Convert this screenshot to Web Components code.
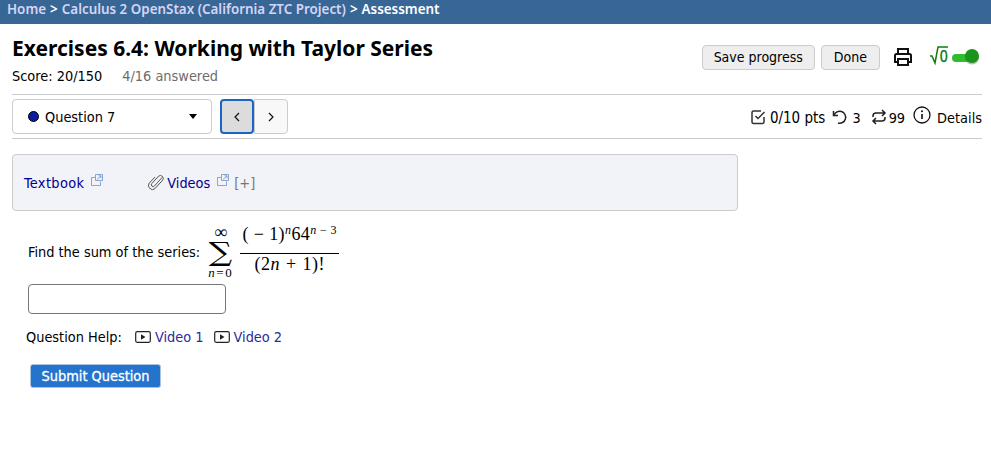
<!DOCTYPE html>
<html>
<head>
<meta charset="utf-8">
<title>Assessment</title>
<style>
  html,body{margin:0;padding:0;background:#fff;}
  body{font-family:"DejaVu Sans",sans-serif;font-stretch:condensed;font-size:14.4px;color:#000;}
</style>
</head>
<body>
<crumb-bar></crumb-bar>
<assess-header></assess-header>
<question-nav></question-nav>
<resource-box></resource-box>
<question-body></question-body>

<script>
const FONT = `"DejaVu Sans",sans-serif`;
const BOLD = `"Noto Sans","DejaVu Sans",sans-serif`;

class CrumbBar extends HTMLElement{
  constructor(){
    super();
    this.attachShadow({mode:'open'}).innerHTML = `
    <style>
      :host{display:block;background:#386795;height:24px;padding-left:7px;color:#fff;
        font-family:${BOLD};font-size:13.4px;line-height:normal;font-weight:600;}
      a{color:#d5d5f7;}
      .sep{margin:0 4px;}
    </style>
    <a>Home</a><span class="sep">&gt;</span><a>Calculus 2 OpenStax (California ZTC Project)</a><span class="sep">&gt;</span><span>Assessment</span>`;
  }
}
customElements.define('crumb-bar',CrumbBar);

class AssessHeader extends HTMLElement{
  constructor(){
    super();
    this.attachShadow({mode:'open'}).innerHTML = `
    <style>
      :host{display:flex;justify-content:space-between;margin:0 9px 0 12px;height:70px;border-bottom:1px solid #ccc;
        font-family:${FONT};font-stretch:condensed;}
      h1{margin:11px 0 0;font-family:${BOLD};font-size:21px;line-height:26px;font-weight:700;}
      .score{margin-top:7px;line-height:17px;display:flex;gap:20px;}
      .gray{color:#6d6d6d;}
      .tools{display:flex;align-items:center;height:26px;margin-top:20px;}
      button{font:inherit;font-size:14px;height:25px;background:#eee;border:1px solid #ccc;border-radius:4px;color:#000;margin-right:6px;padding:0 12px;}
      button:first-child{padding:0 11px;}
      .print{margin:0 16px 0 7px;display:block;}
    </style>
    <div>
      <h1>Exercises 6.4: Working with Taylor Series</h1>
      <div class="score"><span>Score: 20/150</span><span class="gray">4/16 answered</span></div>
    </div>
    <div class="tools">
      <button>Save progress</button><button>Done</button>
      <svg class="print" width="20" height="20" viewBox="0 0 20 20" fill="none" stroke="#111" stroke-width="2"><path d="M5 7V2h10v5M5 15H2V8.500A1.500 1.500 0 0 1 3.500 7h13A1.500 1.500 0 0 1 18 8.500V15h-3"/><path d="M5 12h10v6H5z"/></svg>
      <svg width="53" height="24" viewBox="0 0 53 24">
        <path d="M1 11h2l3 7 3-16h10" fill="none" stroke="#0d7d0d" stroke-width="1.500"/>
        <text x="10.500" y="17" font-size="15" fill="#0d7d0d" stroke="#0d7d0d" stroke-width=".3" font-family="DejaVu Sans" font-stretch="condensed" textLength="8.500" lengthAdjust="spacingAndGlyphs">0</text>
        <rect x="23" y="9" width="18" height="8" rx="4" fill="#2fbd2f"/>
        <circle cx="43" cy="12.500" r="7" fill="#555" opacity=".4"/>
        <circle cx="43" cy="11" r="7" fill="#1a951a"/>
      </svg>
    </div>`;
  }
}
customElements.define('assess-header',AssessHeader);

class QuestionNav extends HTMLElement{
  constructor(){
    super();
    this.attachShadow({mode:'open'}).innerHTML = `
    <style>
      :host{display:flex;justify-content:space-between;align-items:center;margin:0 9px 0 12px;height:43px;border-bottom:1px solid #ccc;
        font-family:${FONT};font-stretch:condensed;}
      .left{display:flex;align-items:center;}
      .select{box-sizing:border-box;width:200px;height:35px;border:1px solid #ccc;border-radius:4px;display:flex;align-items:center;padding:0 14px 0 15px;}
      .dot{width:11px;height:11px;border-radius:50%;background:#0c1c9c;border:.5px solid #000;box-sizing:border-box;margin-right:6px;}
      .caret{margin-left:auto;width:0;height:0;border:4px solid transparent;border-top:5px solid #000;border-bottom:0;}
      .pager{display:flex;margin-left:8px;}
      .pager span{box-sizing:border-box;width:34px;height:35px;display:flex;align-items:center;justify-content:center;border:1px solid #ccc;background:#f8f8f8;border-radius:0 4px 4px 0;}
      .pager .on{background:#dcdcdc;border:2px solid #1a66c4;border-radius:4px;}
      .meta{display:flex;align-items:center;}
      .meta svg{display:block;}
      .meta span{margin-top:2px;}
      .pts{font-size:15px;}
    </style>
    <div class="left">
      <div class="select"><span class="dot"></span>Question 7<span class="caret"></span></div>
      <div class="pager">
        <span class="on"><svg width="8" height="12" viewBox="0 0 8 12" fill="none" stroke="#111" stroke-width="1.200"><path d="M6 2 2 6l4 4"/></svg></span>
        <span><svg width="8" height="12" viewBox="0 0 8 12" fill="none" stroke="#111" stroke-width="1.200"><path d="M2 2l4 4-4 4"/></svg></span>
      </div>
    </div>
    <div class="meta">
      <svg width="16" height="16" viewBox="0 0 16 16" fill="none" stroke="#333" stroke-width="1.500" style="margin-right:4px"><path d="M14 8v5a1.500 1.500 0 0 1-1.500 1.500h-9A1.500 1.500 0 0 1 2 13V3.500A1.500 1.500 0 0 1 3.500 2H11"/><path d="M5.500 7l2.500 2.500L14.500 3"/></svg>
      <span class="pts">0/10 pts</span>
      <svg width="16" height="16" viewBox="0 0 16 16" fill="none" stroke="#222" stroke-width="1.500" style="margin:0 4px 0 7px"><path d="M1.500 2v4.500H6"/><path d="M2 6.300A6 6 0 1 1 6 14"/></svg>
      <span>3</span>
      <svg width="16" height="16" viewBox="0 0 16 16" fill="none" stroke="#222" stroke-width="1.500" style="margin:0 2px 0 10px"><path d="M11 1l3 3-3 3M14 4H5a3 3 0 0 0-3 3v1M5 15l-3-3 3-3M2 12h9a3 3 0 0 0 3-3V8"/></svg>
      <span>99</span>
      <svg width="18" height="18" viewBox="0 0 18 18" fill="none" stroke="#111" stroke-width="1.300" style="margin:-4px 6px 0 8px"><circle cx="9" cy="9" r="8"/><path d="M9 8v5" stroke-width="1.600"/><circle cx="9" cy="5.300" r="1" fill="#111" stroke="none"/></svg>
      <span>Details</span>
    </div>`;
  }
}
customElements.define('question-nav',QuestionNav);

class ResourceBox extends HTMLElement{
  constructor(){
    super();
    const ext = `<svg width="12" height="12" viewBox="0 0 12 12" fill="none" stroke="#7f9cc8" stroke-width=".9"><path d="M9.500 7.500v4h-9v-8H4"/><path d="M4.500.5h7v6h-7z"/><path d="M6 5.500 10 2M7.500 1.800H10v2.500"/></svg>`;
    this.attachShadow({mode:'open'}).innerHTML = `
    <style>
      :host{display:flex;align-items:center;box-sizing:border-box;width:726px;height:57px;margin:15px 0 0 12px;padding-left:11px;
        background:#f2f2f9;border:1px solid #ccc;border-radius:4px;font-family:${FONT};font-stretch:condensed;}
      a{color:#00008b;}
      .wide{letter-spacing:.35px;}
      .ext{margin-left:7px;display:block;margin-top:-3px;}
      .clip{margin-left:45px;margin-right:3px;display:block;}
      .more{color:#777;margin-left:5px;}
    </style>
    <a class="wide">Textbook</a><span class="ext">${ext}</span>
    <svg class="clip" width="16" height="17" viewBox="0 0 16 17" fill="none" stroke="#555" stroke-width="1"><path d="M14 3.500 6.500 12a1.800 1.800 0 0 1-2.700-2.400l6.800-7.500a2.900 2.900 0 0 1 4.100 4L7 14.600a4 4 0 0 1-5.800-5.400L7 3"/></svg>
    <a>Videos</a><span class="ext">${ext}</span><span class="more">[+]</span>`;
  }
}
customElements.define('resource-box',ResourceBox);

class QuestionBody extends HTMLElement{
  constructor(){
    super();
    const play = `<svg width="16" height="12" viewBox="0 0 16 12"><rect x=".7" y=".7" width="14.600" height="10.600" rx="1.500" fill="none" stroke="#222" stroke-width="1.200"/><path d="M6 3.300 10.500 6 6 8.700z" fill="#222"/></svg>`;
    this.attachShadow({mode:'open'}).innerHTML = `
    <style>
      :host{display:block;margin:14px 0 0 28px;font-family:${FONT};font-stretch:condensed;}
      .prompt{display:flex;align-items:center;height:57px;}
      .prompt>span:first-child{margin-top:-3px;}
      .math{font-family:"Liberation Serif",serif;display:flex;align-items:center;margin-left:6px;font-size:18px;}
      .sum{display:flex;flex-direction:column;align-items:center;width:29px;margin-bottom:2px;}
      .sum .big{display:block;font-family:"DejaVu Serif",serif;font-size:26px;line-height:29px;transform:scaleX(1.400);}
      .sum .inf{font-size:18px;line-height:11px;}
      .sum small{font-size:13px;line-height:11px;letter-spacing:1.500px;}
      .frac{display:flex;flex-direction:column;align-items:center;width:99px;margin:0 0 10px 5px;}
      .num{align-self:stretch;text-align:center;padding-bottom:10px;border-bottom:1px solid #000;line-height:18px;white-space:nowrap;letter-spacing:.4px;}
      .den{padding-top:1px;margin-bottom:-1px;line-height:18px;word-spacing:1px;letter-spacing:.5px;}
      sup{font-size:12px;line-height:0;vertical-align:6px;}
      input{display:block;box-sizing:border-box;width:198px;height:30px;margin-top:2px;border:1px solid #767676;border-radius:4px;background:#fff;}
      .help{display:flex;align-items:center;margin:14px 0 0 -2px;height:18px;}
      .help svg{display:block;margin-right:4px;}
      .help a{color:#2a2a9c;margin-right:10px;}
      .help .lbl{margin-right:13px;}
      button{display:block;font-family:${FONT};font-stretch:condensed;font-size:14.4px;margin:18px 0 0 2px;width:131px;height:24px;padding:0;background:#2473cc;color:#fff;border:1px solid #a9c3e0;border-radius:3px;-webkit-text-stroke:.3px #fff;}
    </style>
    <div class="prompt">
      <span>Find the sum of the series:</span>
      <span class="math">
        <span class="sum"><span class="inf">&infin;</span><span class="big">&sum;</span><small><i>n</i>=0</small></span>
        <span class="frac">
          <span class="num">( &minus; 1)<sup><i>n</i></sup>64<sup><i>n</i> &minus; 3</sup></span>
          <span class="den">(2<i>n</i> + 1)!</span>
        </span>
      </span>
    </div>
    <input type="text">
    <div class="help">
      <span class="lbl">Question Help:</span>
      ${play}<a>Video 1</a>${play}<a>Video 2</a>
    </div>
    <button>Submit Question</button>`;
  }
}
customElements.define('question-body',QuestionBody);
</script>
</body>
</html>
